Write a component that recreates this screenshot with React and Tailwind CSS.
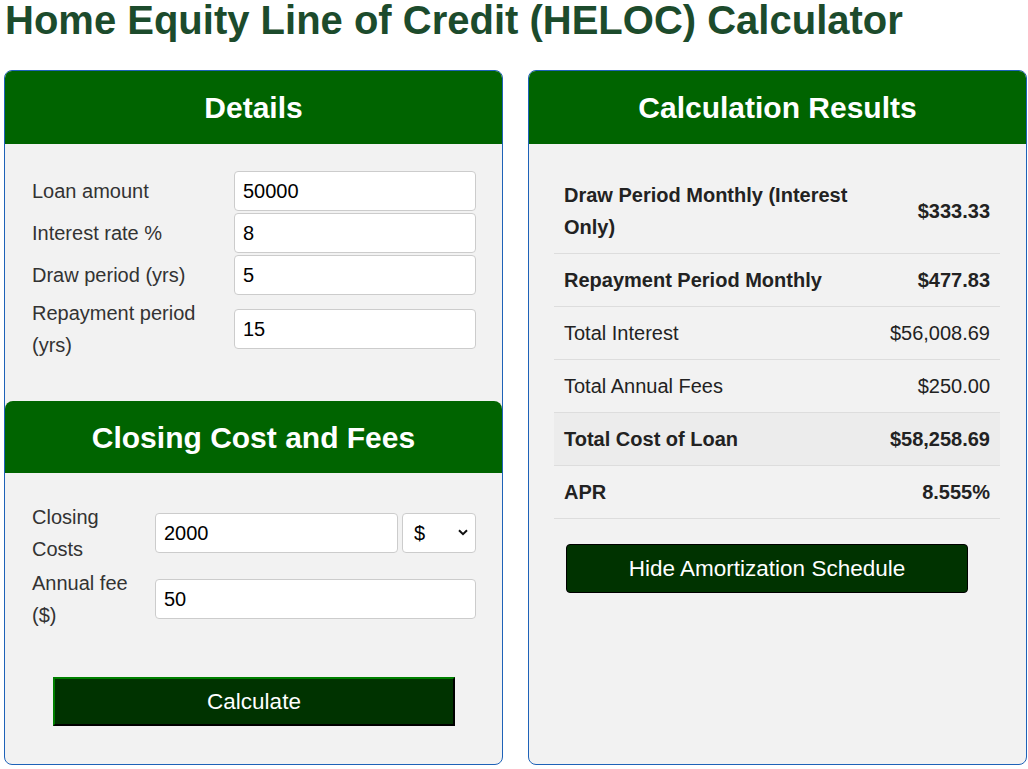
import React, { useState } from 'react';

const results = [
  { label: 'Draw Period Monthly (Interest Only)', value: '$333.33', bold: true },
  { label: 'Repayment Period Monthly', value: '$477.83', bold: true },
  { label: 'Total Interest', value: '$56,008.69' },
  { label: 'Total Annual Fees', value: '$250.00' },
  { label: 'Total Cost of Loan', value: '$58,258.69', bold: true, shade: true },
  { label: 'APR', value: '8.555%', bold: true },
];

const inputCls =
  'h-[40px] w-full border border-[#cccccc] rounded-[4px] bg-white px-[8px] text-[20px] text-black outline-none';

const App = () => {
  const [form, setForm] = useState({
    amount: '50000',
    rate: '8',
    draw: '5',
    repay: '15',
    closing: '2000',
    fee: '50',
  });

  const update = (key) => (e) => setForm({ ...form, [key]: e.target.value });

  return (
    <div className="min-h-screen bg-white font-['Liberation_Sans',Arial,sans-serif] text-[#333333]">
      <h1 className="pl-[5px] text-[40px] leading-[40px] font-bold text-[#1c4b2c] whitespace-nowrap">
        Home Equity Line of Credit (HELOC) Calculator
      </h1>

      <div className="mt-[30px] pl-[4px] pr-[1px] grid grid-cols-2 gap-[25px] items-stretch">
        {/* Inputs */}
        <div className="border border-[#1e62b8] rounded-lg bg-[#f2f2f2] overflow-hidden">
          <h2 className="h-[73px] bg-[#006400] flex items-center justify-center text-white text-[30px] font-bold">
            Details
          </h2>
          <div className="pt-[27px] pb-[40px] pl-[27px] pr-[26px] grid grid-cols-[202px_1fr] gap-y-[2px] items-center text-[20px] leading-[32px]">
            <label>Loan amount</label>
            <input className={inputCls} value={form.amount} onChange={update('amount')} />
            <label>Interest rate %</label>
            <input className={inputCls} value={form.rate} onChange={update('rate')} />
            <label>Draw period (yrs)</label>
            <input className={inputCls} value={form.draw} onChange={update('draw')} />
            <label>Repayment period (yrs)</label>
            <input className={inputCls} value={form.repay} onChange={update('repay')} />
          </div>

          <h2 className="h-[72px] rounded-t-lg bg-[#006400] flex items-center justify-center text-white text-[30px] font-bold">
            Closing Cost and Fees
          </h2>
          <div className="pt-[28px] pb-[38px] pl-[27px] pr-[26px]">
            <div className="grid grid-cols-[123px_1fr] gap-y-[2px] items-center text-[20px] leading-[32px]">
              <label className="pr-[10px]">Closing Costs</label>
              <div className="flex gap-[4px]">
                <input className={inputCls} value={form.closing} onChange={update('closing')} />
                <div className="relative w-[74px] shrink-0">
                  <select className="appearance-none h-[40px] w-full border border-[#cccccc] rounded-[4px] bg-white pl-[11px] text-[20px] text-black outline-none">
                    <option>$</option>
                    <option>%</option>
                  </select>
                  <svg
                    className="absolute right-[8px] top-[16px] pointer-events-none"
                    width="10"
                    height="7"
                    viewBox="0 0 10 7"
                  >
                    <path d="M1 1.2l4 4 4-4" fill="none" stroke="#111" strokeWidth="2" />
                  </svg>
                </div>
              </div>
              <label className="pr-[10px]">Annual fee ($)</label>
              <input className={inputCls} value={form.fee} onChange={update('fee')} />
            </div>
            <button className="mt-[46px] mx-auto block w-[402px] h-[49px] bg-[#003300] border-2 border-t-[#008000] border-l-[#008000] border-b-black border-r-black text-white text-[22.5px]">
              Calculate
            </button>
          </div>
        </div>

        {/* Results */}
        <div className="border border-[#1e62b8] rounded-lg bg-[#f2f2f2] overflow-hidden">
          <h2 className="h-[73px] bg-[#006400] flex items-center justify-center text-white text-[30px] font-bold">
            Calculation Results
          </h2>
          <div className="pt-[25px] pl-[25px] pr-[26px]">
            <table className="w-full border-collapse text-[20px] leading-[32px] text-[#222222]">
              <tbody>
                {results.map((r) => (
                  <tr key={r.label} className={`border-b border-[#dddddd] ${r.shade ? 'bg-[#ececec]' : ''}`}>
                    <td className={`py-[10px] px-[10px] text-left ${r.bold ? 'font-bold' : ''}`}>{r.label}</td>
                    <td className={`py-[10px] px-[10px] text-right whitespace-nowrap ${r.bold ? 'font-bold' : ''}`}>
                      {r.value}
                    </td>
                  </tr>
                ))}
              </tbody>
            </table>
            <button className="mt-[25px] ml-[12px] block w-[402px] h-[49px] bg-[#003300] border border-black rounded-[4px] text-white text-[22.5px]">
              Hide Amortization Schedule
            </button>
          </div>
        </div>
      </div>
    </div>
  );
};

export default App;
